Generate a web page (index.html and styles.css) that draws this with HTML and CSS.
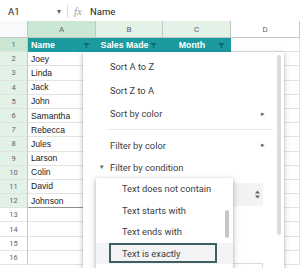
FILE: index.html
```html
<!DOCTYPE html>
<html lang="en">
<head>
  <meta charset="UTF-8">
  <title>Filter by condition</title>
  <link rel="stylesheet" href="styles.css">
</head>
<body>

<div class="sheet">
  <!-- FORMULA BAR -->
  <div class="formula-bar">
    <div class="name-box">A1</div>
    <div class="caret">&#9662;</div>
    <div class="bar-sep"></div>
    <div class="fx">fx</div>
    <div class="formula">Name</div>
  </div>

  <!-- GRID -->
  <div class="grid">
    <div class="corner"></div>
    <div class="ch sel">A</div>
    <div class="ch hl">B</div>
    <div class="ch hl">C</div>
    <div class="ch">D</div>

    <div class="rh sel">1</div>
    <div class="c th left"><span>Name</span><svg class="funnel" width="7" height="5" viewBox="0 0 7 5"><path d="M0 0h7L4.2 2.8V5H2.8V2.8z"/></svg></div>
    <div class="c th"><span>Sales Made</span><svg class="funnel" width="7" height="5" viewBox="0 0 7 5"><path d="M0 0h7L4.2 2.8V5H2.8V2.8z"/></svg></div>
    <div class="c th"><span>Month</span><svg class="funnel" width="7" height="5" viewBox="0 0 7 5"><path d="M0 0h7L4.2 2.8V5H2.8V2.8z"/></svg></div>
    <div class="c"></div>

    <div class="rh hl">2</div><div class="c">Joey</div><div class="c"></div><div class="c"></div><div class="c"></div>
    <div class="rh hl">3</div><div class="c">Linda</div><div class="c"></div><div class="c"></div><div class="c"></div>
    <div class="rh hl">4</div><div class="c">Jack</div><div class="c"></div><div class="c"></div><div class="c"></div>
    <div class="rh hl">5</div><div class="c">John</div><div class="c"></div><div class="c"></div><div class="c"></div>
    <div class="rh hl">6</div><div class="c">Samantha</div><div class="c"></div><div class="c"></div><div class="c"></div>
    <div class="rh hl">7</div><div class="c">Rebecca</div><div class="c"></div><div class="c"></div><div class="c"></div>
    <div class="rh hl">8</div><div class="c">Jules</div><div class="c"></div><div class="c"></div><div class="c"></div>
    <div class="rh hl">9</div><div class="c">Larson</div><div class="c"></div><div class="c"></div><div class="c"></div>
    <div class="rh hl">10</div><div class="c">Colin</div><div class="c"></div><div class="c"></div><div class="c"></div>
    <div class="rh hl">11</div><div class="c">David</div><div class="c"></div><div class="c"></div><div class="c"></div>
    <div class="rh hl">12</div><div class="c last">Johnson</div><div class="c last"></div><div class="c last"></div><div class="c"></div>
    <div class="rh">13</div><div class="c"></div><div class="c"></div><div class="c"></div><div class="c"></div>
    <div class="rh">14</div><div class="c"></div><div class="c"></div><div class="c"></div><div class="c"></div>
    <div class="rh">15</div><div class="c"></div><div class="c"></div><div class="c"></div><div class="c"></div>
    <div class="rh">16</div><div class="c"></div><div class="c"></div><div class="c"></div><div class="c"></div>
  </div>

  <!-- FILTER MENU -->
  <div class="menu">
    <div class="menu-scroll"></div>
    <div class="item">Sort A to Z</div>
    <div class="item">Sort Z to A</div>
    <div class="item">Sort by color <span class="sub">&#9656;</span></div>
    <div class="menu-sep"></div>
    <div class="item">Filter by color <span class="sub">&#9656;</span></div>
    <div class="item section"><span class="open">&#9662;</span>Filter by condition</div>

    <div class="select">
      <svg class="updown" width="5" height="9" viewBox="0 0 5 9"><path d="M0 3.5L2.5 0.5 5 3.5zM0 5.5h5L2.5 8.5z"/></svg>
    </div>
    <div class="value-box"></div>

    <!-- CONDITION LIST -->
    <div class="options">
      <div class="opt-scroll"></div>
      <div class="opt">Text does not contain</div>
      <div class="opt">Text starts with</div>
      <div class="opt">Text ends with</div>
      <div class="opt active"><span class="focus">Text is exactly</span></div>
    </div>
  </div>
</div>

</body>
</html>
```

FILE: styles.css
```css
body { margin: 0; background: #fff; overflow: hidden; }

.sheet {
  position: relative;
  width: 300px;
  height: 268px;
  overflow: hidden;
  font-family: Roboto, "Liberation Sans", sans-serif;
}

/* formula bar */
.formula-bar {
  height: 21px;
  display: flex;
  align-items: center;
  font-size: 9.5px;
  color: #202124;
  box-sizing: border-box;
  padding-top: 1px;
}

.name-box { width: 49px; padding-left: 8px; }

.caret { width: 10px; font-size: 8px; color: #5f6368; }

.bar-sep {
  width: 1px;
  height: 13px;
  background: #dadce0;
  margin-right: 6px;
}

.fx {
  font-family: "Liberation Serif", serif;
  font-style: italic;
  font-size: 11px;
  color: #9aa0a6;
  width: 16px;
}

/* grid */
.grid {
  display: grid;
  grid-template-columns: 28px 68px 67px 68px 69px;
  grid-template-rows: 17px repeat(16, 14.2px);
}

.grid > div {
  box-sizing: border-box;
  border-right: 1px solid #e2e3e3;
  border-bottom: 1px solid #e2e3e3;
}

.corner { background: #f8f9fa; border-color: #c4c7c5 !important; }

.ch {
  background: #fff;
  color: #5f6368;
  font-size: 8px;
  display: flex;
  align-items: center;
  justify-content: center;
  border-color: #c4c7c5 !important;
}

.rh {
  color: #5f6368;
  font-size: 7.5px;
  display: flex;
  align-items: center;
  justify-content: center;
  border-right-color: #c4c7c5 !important;
}

.ch.hl, .rh.hl { background: #e3f2e7; }
.ch.sel, .rh.sel { background: #c9e7d2; }

.c {
  font-family: "Liberation Sans", Arial, sans-serif;
  font-size: 8.6px;
  color: #222;
  padding-left: 3px;
  display: flex;
  align-items: center;
  white-space: nowrap;
}

.c.last { border-bottom-color: #8a8f8d !important; }

.c.th {
  background: #1b9aa0;
  color: #fff;
  font-weight: bold;
  font-size: 8.8px;
  padding-right: 5px;
  border-color: #1b9aa0;
}

.c.th span { flex: 1; text-align: center; }
.c.th.left span { text-align: left; }

.funnel { fill: #0d6a6f; flex: none; margin-top: 1px; }

/* filter menu */
.menu {
  position: absolute;
  left: 83px;
  top: 52px;
  width: 201px;
  height: 230px;
  background: #fff;
  box-shadow: 0 1px 3px rgba(60,64,67,0.3), 0 2px 6px 1px rgba(60,64,67,0.15);
  padding-top: 3px;
  box-sizing: border-box;
  color: #3c4043;
  font-size: 9.3px;
}

.menu-scroll {
  position: absolute;
  right: 3px;
  top: 3px;
  width: 4px;
  height: 180px;
  border-radius: 2px;
  background: #dadce0;
}

.item {
  height: 23.5px;
  display: flex;
  align-items: center;
  padding-left: 27px;
  padding-right: 19px;
}

.sub { margin-left: auto; font-size: 7px; color: #5f6368; }

.menu-sep {
  height: 1px;
  background: #e8eaed;
  margin: 3.5px 11px 3.5px 24px;
}

.item.section { height: 20px; position: relative; }

.open {
  position: absolute;
  left: 17px;
  font-size: 7px;
  color: #5f6368;
}

.select {
  margin: 6px 0 0 13px;
  width: 167px;
  height: 23px;
  border-radius: 3px;
  background: #f1f3f4;
  display: flex;
  align-items: center;
  justify-content: flex-end;
}

.updown { fill: #5f6368; margin-right: 3px; }

.value-box {
  margin: 57px 0 0 13px;
  width: 167px;
  height: 20px;
  border: 1px solid #dadce0;
  box-sizing: border-box;
}

/* condition dropdown list */
.options {
  position: absolute;
  left: 13px;
  top: 126px;
  width: 137px;
  height: 110px;
  background: #fff;
  box-shadow: 0 1px 3px rgba(60,64,67,0.3), 0 3px 6px 2px rgba(60,64,67,0.15);
  overflow: hidden;
}

.opt-scroll {
  position: absolute;
  left: 129px;
  top: 32px;
  width: 4px;
  height: 28px;
  border-radius: 2px;
  background: #c4c7c5;
}

.opt {
  height: 21.5px;
  display: flex;
  align-items: center;
  padding-left: 26px;
  white-space: nowrap;
}

.opt:first-of-type { margin-top: -2px; }

.opt.active {
  background: #f1f3f4;
  padding-left: 13px;
}

.focus {
  width: 108px;
  height: 20px;
  box-sizing: border-box;
  border: 2px solid #3e5e61;
  display: flex;
  align-items: center;
  padding-left: 11px;
}
```
